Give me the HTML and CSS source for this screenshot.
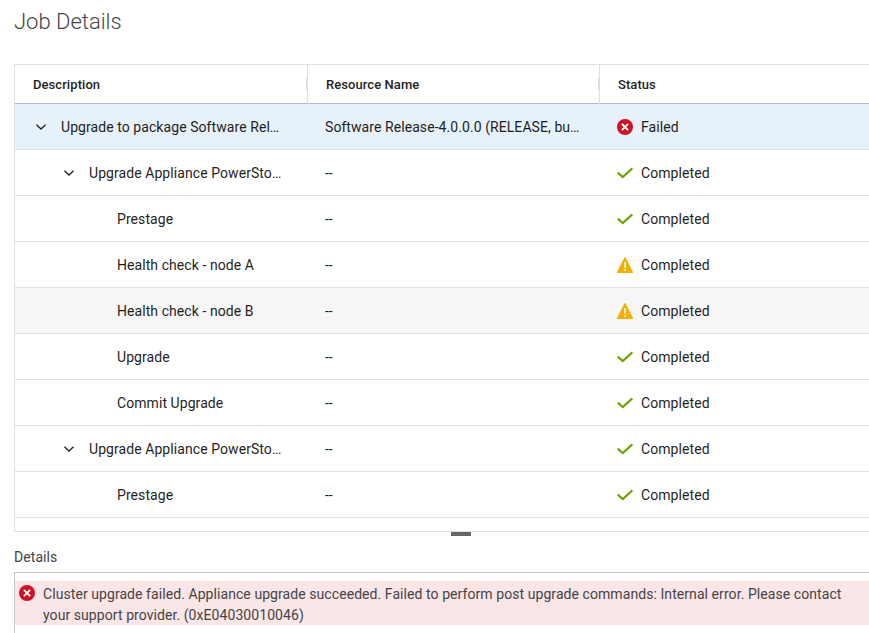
FILE: index.html
```html
<!DOCTYPE html>
<html lang="en">

<head>
  <meta charset="UTF-8" />
  <meta name="viewport" content="width=device-width, initial-scale=1.0" />
  <title>Job Details</title>
  <link rel="stylesheet" href="styles.css">
</head>

<body>
  <!-- Shared icons -->
  <svg class="icon-defs" width="0" height="0">
    <symbol id="chevron" viewBox="0 0 12 12">
      <path d="M1.5 3.8 L6 8 L10.5 3.8" fill="none" stroke="#1f1f1f" stroke-width="1.3" />
    </symbol>
    <symbol id="failed" viewBox="0 0 16 16">
      <circle cx="8" cy="8" r="8" fill="#ce1126" />
      <path d="M4.9 4.9 L11.1 11.1 M11.1 4.9 L4.9 11.1" stroke="#fff" stroke-width="1.9" />
    </symbol>
    <symbol id="check" viewBox="0 0 16 16">
      <path d="M0.7 7.7 L5.8 12 L15.4 3.3" fill="none" stroke="#6ea204" stroke-width="2.2" />
    </symbol>
    <symbol id="warning" viewBox="0 0 16 16">
      <path d="M8 0.8 L15.3 15.2 H0.7 Z" fill="#f2af00" stroke="#f2af00" stroke-width="1.4" stroke-linejoin="round" />
      <path d="M8 5 V10.8 M8 12.2 V14" stroke="#fff" stroke-width="1.6" />
    </symbol>
  </svg>

  <div class="job-details">
    <h1>Job Details</h1>

    <div class="job-grid">
      <div class="grid-header">
        <div class="header-cell">Description</div>
        <div class="header-cell">Resource Name</div>
        <div class="header-cell">Status</div>
      </div>

      <div class="grid-row selected">
        <div class="cell level-1"><svg class="chevron"><use href="#chevron" /></svg><span>Upgrade to package Software Rel…</span></div>
        <div class="cell">Software Release-4.0.0.0 (RELEASE, bu…</div>
        <div class="cell status"><svg class="icon"><use href="#failed" /></svg>Failed</div>
      </div>
      <div class="grid-row">
        <div class="cell level-2"><svg class="chevron"><use href="#chevron" /></svg><span>Upgrade Appliance PowerSto…</span></div>
        <div class="cell empty">--</div>
        <div class="cell status"><svg class="icon"><use href="#check" /></svg>Completed</div>
      </div>
      <div class="grid-row">
        <div class="cell level-3">Prestage</div>
        <div class="cell empty">--</div>
        <div class="cell status"><svg class="icon"><use href="#check" /></svg>Completed</div>
      </div>
      <div class="grid-row">
        <div class="cell level-3">Health check - node A</div>
        <div class="cell empty">--</div>
        <div class="cell status"><svg class="icon"><use href="#warning" /></svg>Completed</div>
      </div>
      <div class="grid-row hovered">
        <div class="cell level-3">Health check - node B</div>
        <div class="cell empty">--</div>
        <div class="cell status"><svg class="icon"><use href="#warning" /></svg>Completed</div>
      </div>
      <div class="grid-row">
        <div class="cell level-3">Upgrade</div>
        <div class="cell empty">--</div>
        <div class="cell status"><svg class="icon"><use href="#check" /></svg>Completed</div>
      </div>
      <div class="grid-row">
        <div class="cell level-3">Commit Upgrade</div>
        <div class="cell empty">--</div>
        <div class="cell status"><svg class="icon"><use href="#check" /></svg>Completed</div>
      </div>
      <div class="grid-row">
        <div class="cell level-2"><svg class="chevron"><use href="#chevron" /></svg><span>Upgrade Appliance PowerSto…</span></div>
        <div class="cell empty">--</div>
        <div class="cell status"><svg class="icon"><use href="#check" /></svg>Completed</div>
      </div>
      <div class="grid-row">
        <div class="cell level-3">Prestage</div>
        <div class="cell empty">--</div>
        <div class="cell status"><svg class="icon"><use href="#check" /></svg>Completed</div>
      </div>
    </div>

    <div class="splitter"></div>

    <h2>Details</h2>
    <div class="details-panel">
      <div class="error-message">
        <svg class="icon"><use href="#failed" /></svg>
        <p>Cluster upgrade failed. Appliance upgrade succeeded. Failed to perform post upgrade commands: Internal error. Please contact your support provider. (0xE04030010046)</p>
      </div>
    </div>
  </div>
</body>

</html>
```

FILE: styles.css
```css
:root {
  --text: #1f1f1f;
  --text-muted: #444444;
  --border: #e0e0e3;
  --row-border: #dfe0e9;
  --selected: #e6f1fa;
  --hover: #f7f7f7;
  --error-bg: #fae5e7;
}

* {
  margin: 0;
  padding: 0;
  box-sizing: border-box;
}

body {
  background: #ffffff;
  color: var(--text);
  font-family: Roboto, sans-serif;
  font-size: 14px;
  letter-spacing: 0.07px;
  overflow: hidden;
}

.icon-defs {
  display: none;
}

.job-details {
  display: flex;
  flex-direction: column;
  height: 633px;
  padding-left: 14px;
}

h1 {
  height: 64px;
  padding-top: 8px;
  color: var(--text-muted);
  font-size: 22px;
  font-weight: 300;
  line-height: 28px;
  letter-spacing: 0;
}

/* Job table */
.job-grid {
  height: 468px;
  border: 1px solid var(--border);
  border-right: none;
}

.grid-header,
.grid-row {
  display: grid;
  grid-template-columns: 293px 292px 1fr;
}

.grid-header {
  height: 39px;
  border-bottom: 1px solid #b4bcc8;
}

.header-cell {
  position: relative;
  padding-left: 18px;
  border-right: 1px solid var(--border);
  font-size: 13px;
  font-weight: 500;
  line-height: 39px;
}

.header-cell:last-child {
  border-right: none;
}

/* Column resize handle */
.header-cell:not(:last-child)::after {
  content: "";
  position: absolute;
  top: 13px;
  right: 0;
  width: 1px;
  height: 12px;
  background: #dcdce4;
}

.grid-row {
  height: 46px;
  border-bottom: 1px solid var(--row-border);
}

.grid-row.selected {
  background: var(--selected);
}

.grid-row.hovered {
  background: var(--hover);
}

.cell {
  display: flex;
  align-items: center;
  padding-left: 17px;
  white-space: nowrap;
}

.cell.empty {
  letter-spacing: -0.1px;
}

.level-1 {
  padding-left: 20px;
}

.level-2 {
  padding-left: 48px;
}

.level-3 {
  padding-left: 102px;
}

.chevron {
  width: 12px;
  height: 12px;
  margin-right: 14px;
}

.icon {
  flex: none;
  width: 16px;
  height: 16px;
  margin-right: 8px;
}

.splitter {
  width: 20px;
  height: 4px;
  margin-left: 437px;
  background: #666666;
}

/* Details */
h2 {
  height: 36px;
  padding-top: 11px;
  color: var(--text-muted);
  font-size: 14px;
  font-weight: 400;
  line-height: 20px;
}

.details-panel {
  flex: 1;
  padding-top: 8px;
  border: 1px solid #c8c8c8;
  border-right: none;
  border-bottom: none;
}

.error-message {
  display: flex;
  height: 44px;
  padding: 3px 20px 0 4px;
  background: var(--error-bg);
  color: var(--text-muted);
  line-height: 21px;
}

.error-message .icon {
  margin-top: 1px;
}
```
